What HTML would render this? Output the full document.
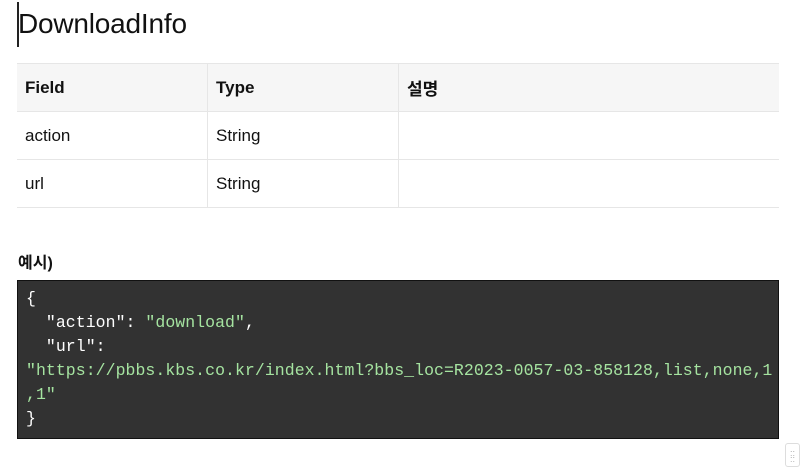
<!DOCTYPE html>
<html><head><meta charset="utf-8"><style>
body{margin:0;background:#fff;width:800px;height:467px;overflow:hidden;font-family:"Liberation Sans","Noto Sans CJK KR",sans-serif;color:#111;position:relative}
.cur{position:absolute;left:17px;top:2px;width:2px;height:45px;background:#222}
h1{position:absolute;left:18px;top:8px;margin:0;font-size:28px;font-weight:normal;letter-spacing:-0.2px}
table{position:absolute;left:17px;top:63px;width:762px;border-collapse:collapse;font-size:17px}
td,th{border:1px solid #e6e6e6;height:47px;padding:0 8px;text-align:left;border-left:none;border-right:none}
td+td,th+th{border-left:1px solid #e6e6e6}
th{background:#f6f6f6;font-weight:bold}
.ex{position:absolute;left:18px;top:249px;font-weight:bold;font-size:16px}
pre{position:absolute;left:17px;top:280px;width:762px;height:159px;box-sizing:border-box;margin:0;background:#323232;border:1px solid #111;color:#fff;font-family:"Liberation Mono",monospace;font-size:16.5px;letter-spacing:0.05px;line-height:24px;padding:6px 8px;white-space:pre;overflow:hidden}
.s{color:#a5e3a0}
.h{position:absolute;left:785px;top:443px;width:13px;height:22px;border:1px solid #ddd;border-radius:3px;color:#aaa;font-size:9px;line-height:6px;text-align:center}
</style></head><body>
<div class="cur"></div>
<h1>DownloadInfo</h1>
<table>
<tr><th style="width:174px">Field</th><th style="width:174px">Type</th><th>설명</th></tr>
<tr><td>action</td><td>String</td><td></td></tr>
<tr><td>url</td><td>String</td><td></td></tr>
</table>
<div class="ex">예시)</div>
<pre>{
  "action": <span class="s">"download"</span>,
  "url":
<span class="s">"https://pbbs.kbs.co.kr/index.html?bbs_loc=R2023-0057-03-858128,list,none,1</span>
<span class="s">,1"</span>
}</pre>
<div class="h"><br>:: <br>::</div>
</body></html>
